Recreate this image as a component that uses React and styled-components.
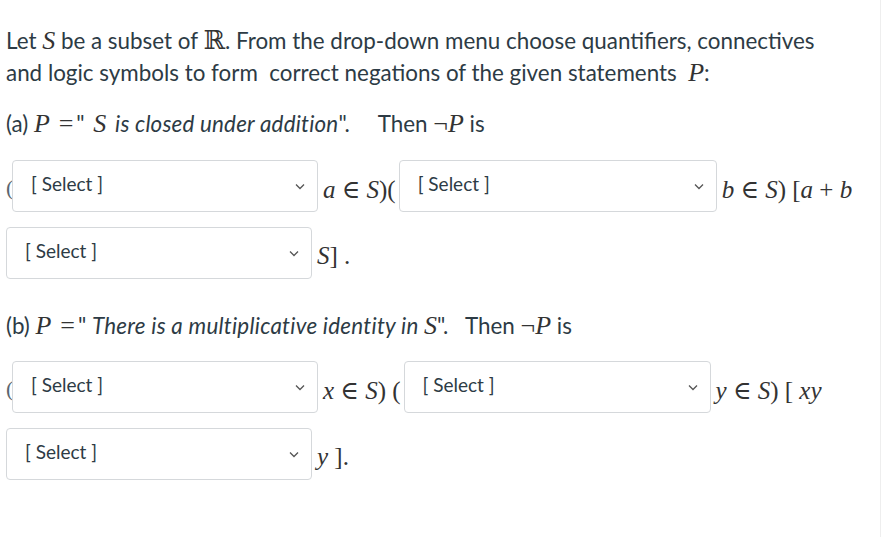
import styled, { createGlobalStyle } from "styled-components";

const GlobalStyle = createGlobalStyle`
  html, body {
    margin: 0;
    padding: 0;
    background: #ffffff;
  }
  body {
    font-family: Lato, "Open Sans", sans-serif;
    color: #2d3b45;
  }
`;

const Page = styled.div`
  width: 881px;
  height: 537px;
  box-sizing: border-box;
  padding: 25px 0 0 6px;
  border-right: 1px solid #eeeeee;
  overflow: hidden;
`;

const Para = styled.p`
  margin: ${({ $top }) => $top || 0}px 0 0 0;
  font-size: 22.4px;
  line-height: 32px;
  height: 32px;
  white-space: nowrap;
`;

const M = styled.span`
  font-family: "Liberation Serif", "DejaVu Serif", serif;
  font-style: ${({ $up }) => ($up ? "normal" : "italic")};
  font-size: 26px;
  line-height: 0;
  color: #333;
  margin: 0 ${({ $pad }) => $pad || 0}px;
`;

const Em = styled.span`
  font-style: italic;
  letter-spacing: ${({ $ls }) => $ls || 0}px;
`;

const Row = styled.div`
  display: flex;
  align-items: center;
  margin-top: ${({ $top }) => $top}px;
  height: 52px;
`;

const Paren = styled.span`
  font-family: "Liberation Serif", "DejaVu Serif", serif;
  font-size: 22px;
  color: #5a6670;
  width: 6px;
  margin-top: 4px;
`;

const Box = styled.div`
  box-sizing: border-box;
  width: ${({ $w }) => $w || 306}px;
  height: 52px;
  border: 1px solid #d5d8db;
  border-radius: 4px;
  background: #fff;
  display: flex;
  align-items: center;
  justify-content: space-between;
  padding: 0 12px 5px 18px;
  font-size: 19px;
  color: #2d3b45;
  svg {
    margin-top: 6px;
  }
`;

const Expr = styled.span`
  font-family: "Liberation Serif", "DejaVu Serif", serif;
  font-size: 25px;
  color: #333;
  white-space: pre;
  margin: 6px 3px 0 5px;
`;

const I = styled.i`
  font-style: italic;
`;

const Chevron = () => (
  <svg width="10" height="7" viewBox="0 0 10 7">
    <path d="M1 1.5l4 4 4-4" fill="none" stroke="#555" strokeWidth="1.3" />
  </svg>
);

const Select = ({ w }) => (
  <Box $w={w}>
    <span>[ Select ]</span>
    <Chevron />
  </Box>
);

export default function App() {
  return (
    <>
      <GlobalStyle />
      <Page>
        <Para>
          Let <M>S</M> be a subset of <M $up>ℝ</M>. From the drop-down menu choose quantifiers, connectives
        </Para>
        <Para>
          and logic symbols to form&nbsp; correct negations of the given statements&nbsp; <M>P</M>:
        </Para>
        <Para $top={19}>
          (a) <M>P</M> <M $up $pad={3}>=</M>" <M $pad={3}>S</M> <Em $ls={0.2}>is closed under addition</Em>".&nbsp;&nbsp;&nbsp;&nbsp; Then <M $up>¬</M><M>P</M> is
        </Para>

        <Row $top={20}>
          <Paren>(</Paren>
          <Select />
          <Expr>
            <I>a</I> ∈ <I>S</I>)(
          </Expr>
          <Select w={318} />
          <Expr>
            <I>b</I> ∈ <I>S</I>) [<I>a</I> + <I>b</I>
          </Expr>
        </Row>
        <Row $top={15}>
          <Select />
          <Expr>
            <I>S</I>] .
          </Expr>
        </Row>

        <Para $top={31}>
          (b) <M>P</M> <M $up $pad={3}>=</M>" <Em $ls={0.25}>There is a multiplicative identity in </Em><M>S</M>".&nbsp;&nbsp; Then <M $up>¬</M><M>P</M> is
        </Para>

        <Row $top={19}>
          <Paren>(</Paren>
          <Select />
          <Expr>
            <I>x</I> ∈ <I>S</I>) (
          </Expr>
          <Select w={307} />
          <Expr>
            <I>y</I> ∈ <I>S</I>) [ <I>xy</I>
          </Expr>
        </Row>
        <Row $top={15}>
          <Select />
          <Expr>
            <I>y</I> ].
          </Expr>
        </Row>
      </Page>
    </>
  );
}
